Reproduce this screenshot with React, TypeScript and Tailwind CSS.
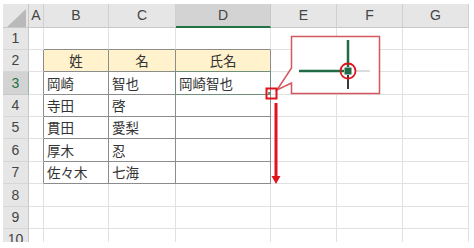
import React from 'react';

const cols = ['A', 'B', 'C', 'D', 'E', 'F', 'G'];
const colWidths = ['w-[15px]', 'w-[65px]', 'w-[67px]', 'w-[95px]', 'w-[66px]', 'w-[66px]', 'w-[66px]'];
const rowHeights = ['h-[22px]', 'h-[22px]', 'h-[23px]', 'h-[22px]', 'h-[22px]', 'h-[23px]', 'h-[22px]', 'h-[23px]', 'h-[22px]', 'h-[22px]'];

// table body rows 2..7, columns B..D
const data: Record<number, string[]> = {
  2: ['姓', '名', '氏名'],
  3: ['岡崎', '智也', '岡崎智也'],
  4: ['寺田', '啓', ''],
  5: ['貫田', '愛梨', ''],
  6: ['厚木', '忍', ''],
  7: ['佐々木', '七海', ''],
};

const jp = "font-['Noto_Sans_CJK_JP',sans-serif]";

function cellClass(row: number, col: number) {
  // col index: 0=A ... 6=G
  const inTable = row >= 2 && row <= 7 && col >= 1 && col <= 3;
  let right = 'border-r-[#e1e1e1]';
  let bottom = 'border-b-[#e1e1e1]';
  if (inTable) {
    right = 'border-r-[#8c8c8c]';
    bottom = 'border-b-[#8c8c8c]';
  }
  if (col === 0 && row >= 2 && row <= 7) right = 'border-r-[#8c8c8c]';
  if (row === 1 && col >= 1 && col <= 3) bottom = 'border-b-[#8c8c8c]';
  const bg = row === 2 && inTable ? 'bg-[#fff2cc]' : 'bg-white';
  const align = row === 2 ? 'justify-center' : 'justify-start pl-[3px]';
  return `relative flex items-center border-r border-b ${right} ${bottom} ${bg} ${align}`;
}

export default function App() {
  return (
    <div className="relative w-[474px] h-[248px] bg-white overflow-hidden">
      <div className="pl-[3px] pt-[4px]">
        <div className="w-[466px] h-[238px] overflow-hidden">
          {/* column header row */}
          <div className="flex h-[24px] font-['Liberation_Sans',sans-serif] text-[14px] text-[#444]">
            <div className="relative w-[26px] bg-[#e6e6e6] border-r border-b border-[#c8c8c8]">
              <svg className="absolute left-[4px] top-[5px]" width="19" height="18" viewBox="0 0 19 18">
                <polygon points="19,0 19,18 0,18" fill="#b9b9b9" />
              </svg>
            </div>
            {cols.map((c, i) => {
              const sel = c === 'D';
              return (
                <div
                  key={c}
                  className={`${colWidths[i]} flex items-center justify-center border-r ${
                    sel
                      ? 'bg-[#d3d3d3] border-r-[#c8c8c8] border-b-2 border-b-[#217346]'
                      : 'bg-[#e6e6e6] border-r-[#d0d0d0] border-b border-b-[#c8c8c8]'
                  }`}
                >
                  {c}
                </div>
              );
            })}
          </div>

          {/* body rows */}
          {rowHeights.map((h, ri) => {
            const row = ri + 1;
            const selRow = row === 3;
            return (
              <div key={row} className={`flex ${h}`}>
                <div
                  className={`w-[26px] flex items-center justify-center font-['Liberation_Sans',sans-serif] text-[14px] border-r border-b ${
                    selRow
                      ? 'bg-[#d3d3d3] text-[#217346] border-r-[#9bb5a5] border-b-[#c8c8c8]'
                      : 'bg-[#e6e6e6] text-[#444] border-r-[#c8c8c8] border-b-[#d6d6d6]'
                  }`}
                >
                  {row}
                </div>
                {cols.map((c, ci) => {
                  const text = data[row] && ci >= 1 && ci <= 3 ? data[row][ci - 1] : '';
                  const active = row === 3 && c === 'D';
                  return (
                    <div key={c} className={`${colWidths[ci]} ${cellClass(row, ci)} ${jp} text-[13.5px] text-[#333]`}>
                      {text}
                      {active && (
                        <>
                          <div className="absolute -left-px -top-px -right-px -bottom-px border border-[#6f8f7c]" />
                          <div className="absolute -right-[3px] -bottom-[3px] w-[5px] h-[5px] bg-[#6f8f7c]" />
                        </>
                      )}
                    </div>
                  );
                })}
              </div>
            );
          })}
        </div>
      </div>

      {/* annotation overlay: fill handle callout and drag arrow */}
      <svg className="absolute left-0 top-0 pointer-events-none" width="474" height="248" viewBox="0 0 474 248">
        <path
          d="M291.5 36.5 H379.5 V93.5 H291.5 V83 L277 90 L291.5 68 Z"
          fill="white"
          stroke="#d4585e"
          strokeWidth="1.5"
        />
        <line x1="299" y1="71" x2="344" y2="71" stroke="#1f6b45" strokeWidth="2.5" />
        <line x1="348" y1="40" x2="348" y2="67" stroke="#1f6b45" strokeWidth="2.5" />
        <line x1="348" y1="75" x2="348" y2="89" stroke="#3a3a3a" strokeWidth="2" />
        <line x1="356" y1="71" x2="370" y2="71" stroke="#d0d0d0" strokeWidth="1.5" />
        <rect x="344.5" y="67.5" width="7" height="7" fill="#1f6b45" />
        <circle cx="348" cy="71" r="7.5" fill="none" stroke="#e0141e" strokeWidth="1.8" />

        <rect x="266.5" y="88.5" width="10" height="10" fill="none" stroke="#e0141e" strokeWidth="2" />
        <line x1="276" y1="103" x2="276" y2="177" stroke="#e0141e" strokeWidth="3" />
        <polygon points="271.5,176 280.5,176 276,184" fill="#e0141e" />
      </svg>
    </div>
  );
}
